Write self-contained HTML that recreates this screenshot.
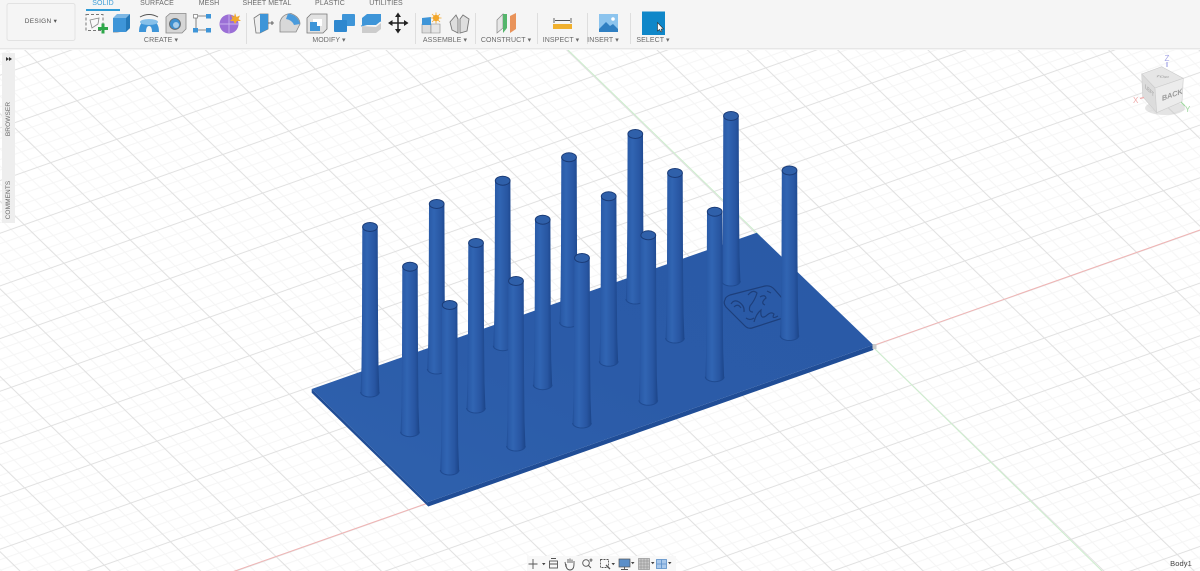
<!DOCTYPE html>
<html><head><meta charset="utf-8"><style>
html,body{margin:0;padding:0;width:1200px;height:571px;overflow:hidden;background:#fff;font-family:"Liberation Sans",sans-serif}
#stage{position:absolute;left:0;top:0}
.t{position:absolute;font-size:7px;color:#6a6a6a;transform:translateX(-50%);white-space:nowrap;letter-spacing:.1px;line-height:8px}
</style></head><body>
<svg id="stage" width="1200" height="571" viewBox="0 0 1200 571" xmlns="http://www.w3.org/2000/svg">
<defs>
<pattern id="grid" width="100" height="100" patternUnits="userSpaceOnUse" patternTransform="matrix(.662 -.234 .398 .386 872.2 346.3)">
<g fill="#f5f5f5">
<rect x="19.2" y="0" width="1.6" height="100"/><rect x="39.2" y="0" width="1.6" height="100"/><rect x="59.2" y="0" width="1.6" height="100"/><rect x="79.2" y="0" width="1.6" height="100"/>
<rect y="19" x="0" width="100" height="2"/><rect y="39" x="0" width="100" height="2"/><rect y="59" x="0" width="100" height="2"/><rect y="79" x="0" width="100" height="2"/>
</g>
<g fill="#e0e0e0">
<rect x="0" y="0" width=".8" height="100"/><rect x="99.2" y="0" width=".8" height="100"/>
<rect y="0" x="0" width="100" height="1"/><rect y="99" x="0" width="100" height="1"/>
</g>
</pattern>
<linearGradient id="pg" x1="0" y1="0" x2="1" y2="0">
<stop offset="0" stop-color="#214d96"/><stop offset=".1" stop-color="#2a5ba8"/><stop offset=".35" stop-color="#3165b3"/><stop offset=".75" stop-color="#2856a2"/><stop offset="1" stop-color="#1c4589"/>
</linearGradient>
<linearGradient id="pl" x1="0" y1="1" x2="1" y2="0">
<stop offset="0" stop-color="#2f62ae"/><stop offset=".5" stop-color="#2b5ba8"/><stop offset="1" stop-color="#2a5aa6"/>
</linearGradient>
<g id="peg">
<path d="M-7.700,0 L-8,90 L-8.500,140 L-9.400,165 A9.400,5 0 0 0 9.400,165 L8.500,140 L8,90 L7.700,0 Z" fill="url(#pg)"/>
<path d="M-9.400,165 A9.400,5 0 0 0 9.400,165" fill="none" stroke="#1f4a90" stroke-width="1"/>
<ellipse cx="0" cy="0" rx="7.400" ry="4.500" fill="#2f60aa" stroke="#1b3c78" stroke-width="1"/>
</g>
</defs>
<rect width="1200" height="571" fill="#fff"/>
<rect width="1200" height="571" fill="url(#grid)"/>
<line x1="872" y1="346" x2="1200" y2="230" stroke="#f0b4b4" stroke-width="1"/>
<line x1="232" y1="572" x2="428" y2="503" stroke="#f0b4b4" stroke-width="1"/>
<line x1="874" y1="348" x2="1102" y2="571" stroke="#cdeecd" stroke-width="1"/>
<line x1="568" y1="50" x2="760" y2="236" stroke="#cdeecd" stroke-width="1"/>

<!-- plate -->
<polygon points="311.700,389 427.300,502.300 873.300,345 873.300,350 428.300,506.500 311.700,392.700" fill="#204d96"/>
<polygon points="311.700,389 756.700,232.700 873.300,345 427.300,502.300" fill="url(#pl)"/>
<rect x="872.500" y="344" width="4" height="5" fill="#c9c9c9"/>

<use href="#peg" x="731" y="116"/>
<use href="#peg" x="635.300" y="134"/>
<use href="#peg" x="569" y="157.300"/>

<!-- logo -->
<g fill="none" stroke="#1d3f7c" stroke-width="1.200">
<path d="M725,300 Q725,297 730,295 L765,286 Q771,285 775,290 L782,298 M783,318 L752,328 Q748,329 745,326 L726,307 Q723,303 725,300"/>
<path d="M731,304 Q734,299 739,302 Q745,306 744,312 M734,307 Q738,303 741,308"/>
<path d="M748,295 Q753,289 757,293 Q755,300 750,306 Q748,312 753,312 M760,297 Q765,294 766,298 Q760,303 765,305 M754,322 Q756,314 761,310 Q760,320 766,316 Q771,311 774,314 Q771,320 778,316"/>
<path d="M746,318 Q750,321 754,318 M767,291 L771,293"/>
</g>

<use href="#peg" x="789.500" y="170.500"/>
<use href="#peg" x="675" y="173"/>
<use href="#peg" x="502.700" y="180.700"/>
<use href="#peg" x="608.700" y="196.300"/>
<use href="#peg" x="436.700" y="204"/>
<use href="#peg" x="714.700" y="211.700"/>
<use href="#peg" x="542.700" y="219.700"/>
<use href="#peg" x="370" y="227"/>
<use href="#peg" x="648.300" y="235.300"/>
<use href="#peg" x="476" y="243"/>
<use href="#peg" x="582" y="258"/>
<use href="#peg" x="410" y="266.700"/>
<use href="#peg" x="516" y="281"/>
<use href="#peg" x="449.700" y="305"/>

<!-- toolbar -->
<rect x="0" y="0" width="1200" height="48" fill="#f5f5f5"/>
<rect x="0" y="48" width="1200" height="1" fill="#e6e6e6"/>
<rect x="0" y="49" width="1200" height="1" fill="#f4f4f4"/>
<rect x="7" y="3.500" width="68" height="37" rx="2" fill="#f5f5f5" stroke="#e2e2e2"/>
<rect x="86" y="9" width="34" height="2" fill="#2e9bd6"/>
<g stroke="#dedede" stroke-width="1">
<line x1="246.500" y1="13" x2="246.500" y2="44"/><line x1="415.500" y1="13" x2="415.500" y2="44"/><line x1="475.500" y1="13" x2="475.500" y2="44"/><line x1="537.500" y1="13" x2="537.500" y2="44"/><line x1="587.500" y1="13" x2="587.500" y2="44"/><line x1="630.500" y1="13" x2="630.500" y2="44"/>
</g>

<!-- sketch -->
<rect x="86" y="14.500" width="17" height="16" fill="#f8f8f8" stroke="#777" stroke-width="1" stroke-dasharray="3 2"/>
<path d="M90,20 L99,18 L98,24 L92,28 Z" fill="none" stroke="#888" stroke-width=".8"/>
<path d="M98,27 h3.500 v-3.500 h3 v3.500 h3.500 v3 h-3.500 v3.500 h-3 v-3.500 h-3.500 z" fill="#2ea84a"/>
<!-- box -->
<polygon points="113,18 126,15 130,15 130,29 117,33 113,33" fill="#6a6a6a" opacity=".35"/>
<polygon points="113,18 117,14 130,14 126,18" fill="#7db7e4"/>
<polygon points="113,18 126,18 126,32 113,32" fill="#3e95d8"/>
<polygon points="126,18 130,14 130,28 126,32" fill="#2478b8"/>
<!-- loft -->
<path d="M140,17 Q149,12 158,17" fill="none" stroke="#555" stroke-width="1"/>
<path d="M139,32 Q139,20 149,20 Q159,20 159,32 L152,32 Q152,26 149,26 Q146,26 146,32 Z" fill="#3e95d8"/>
<ellipse cx="149" cy="22" rx="9" ry="3" fill="#86c0ea"/>
<!-- hole -->
<polygon points="166,17 170,13.500 186,13.500 186,29 182,33 166,33" fill="#d6d6d6" stroke="#888" stroke-width=".8"/>
<circle cx="175" cy="24" r="5.500" fill="#3e8fcf" stroke="#666" stroke-width=".8"/>
<circle cx="176" cy="25" r="3" fill="#a8cdea"/>
<!-- pattern -->
<path d="M198,16 H206 M196,18 V28 M198,30 H206" stroke="#666" stroke-width=".8" fill="none"/>
<rect x="193.500" y="14.500" width="4" height="3.500" fill="#fff" stroke="#777" stroke-width=".7"/>
<rect x="206" y="14" width="5" height="4.500" fill="#3e95d8"/>
<rect x="193" y="28" width="5" height="4.500" fill="#3e95d8"/>
<rect x="206" y="28" width="5" height="4.500" fill="#3e95d8"/>
<!-- form -->
<circle cx="229" cy="24" r="9.500" fill="#9b6fd6"/>
<path d="M229,15 V33 M220,24 H238" stroke="#c9b2ee" stroke-width=".9"/>
<polygon points="235,13 236.500,17 240,15.500 238.500,19 241,21 237,21 235,24 233.500,21 230,21 232.500,18.500 231,15 234,17" fill="#f0a92e"/>
<!-- press pull -->
<path d="M254,18 L260,14 L268,14 L268,29 L260,33 L256,33 Z" fill="#eee" stroke="#777" stroke-width=".8"/>
<polygon points="260,14 268,14 268,29 260,33" fill="#3e95d8"/>
<path d="M268,23 H274 M272,21 V25" stroke="#444" stroke-width=".8"/>
<!-- fillet -->
<path d="M280,32 V22 Q282,14 291,13.500 Q300,17 300,24 L296,32 Z" fill="#d8d8d8" stroke="#888" stroke-width=".8"/>
<path d="M288,13.500 Q298,15 300,24 L294,25 Q292,20 286,19 Z" fill="#4a9bdc"/>
<!-- shell -->
<path d="M307,18 L311,14 L327,14 L327,29 L323,33 L307,33 Z" fill="#e2e2e2" stroke="#777" stroke-width=".8"/>
<polygon points="310,22 320,22 320,31 310,31" fill="#3e95d8"/>
<polygon points="313,19 322,19 322,26 317,26 317,22 313,22" fill="#fff"/>
<!-- combine -->
<rect x="342" y="14" width="13" height="12" rx="1" fill="#3e95d8"/>
<rect x="334" y="20" width="13" height="12" rx="1" fill="#2f88cf"/>
<!-- split -->
<polygon points="362,18 367,14 381,14 381,21 376,25 362,25" fill="#3e95d8"/>
<line x1="361" y1="26" x2="381" y2="21" stroke="#3e95d8"/>
<polygon points="362,26 376,27 381,23 381,29 376,33 362,33" fill="#ccc"/>
<!-- move -->
<path d="M398,14 V32 M389.500,23 H407.500" stroke="#222" stroke-width="1.500"/>
<path d="M398,12.500 L401,17 H395 Z M398,33.500 L401,29 H395 Z M388,23 L392.500,20 V26 Z M408.500,23 L404,20 V26 Z" fill="#222"/>
<!-- assemble -->
<polygon points="422,24 431,24 431,33 422,33" fill="#dcdcdc" stroke="#888" stroke-width=".6"/>
<polygon points="431,24 440,24 440,33 431,33" fill="#e6e6e6" stroke="#888" stroke-width=".6"/>
<polygon points="422,18 431,17 431,25 422,25" fill="#3e95d8"/>
<circle cx="436" cy="18" r="3.200" fill="#f3a72a"/>
<path d="M436,12.500 V23.500 M430.500,18 H441.500 M432,14 L440,22 M440,14 L432,22" stroke="#f3a72a" stroke-width=".8"/>
<!-- joint -->
<path d="M450,22 L456,15 L458,19 V33 L452,30 Z M469,19 L463,15 L460,19 V33 L467,31 Z" fill="#dedede" stroke="#777" stroke-width=".9"/>
<!-- construct -->
<path d="M497,20 L503,14 V28 L497,33 Z" fill="#e6e6e6" stroke="#888" stroke-width=".7"/>
<polygon points="503,14 507,14 507,28 503,33" fill="#55b56c"/>
<polygon points="510,16 516,13 516,29 510,33" fill="#e9935a"/>
<!-- inspect -->
<path d="M554,18 V23 M571,18 V23 M555,20.500 H570" stroke="#555" stroke-width=".9"/>
<rect x="553" y="24" width="19" height="5" fill="#f0b02e"/>
<!-- insert -->
<rect x="599" y="14" width="19" height="18" fill="#8cc4ee"/>
<path d="M599,29 L606,22 L610,26 L613,24 L618,29 V32 H599 Z" fill="#2f7fc2"/>
<circle cx="613" cy="19" r="1.800" fill="#fff"/>
<!-- select -->
<rect x="642" y="11.500" width="23" height="23.500" fill="#0f87c9"/>
<path d="M657.500,22.500 V31 L659.500,29.500 L661,32 L662,31.500 L661,29 H663.500 Z" fill="#fff" stroke="#333" stroke-width=".6"/>

<!-- left panel -->
<rect x="2" y="53" width="13" height="170" fill="#eeeeee"/>
<path d="M6,57 L9,59 L6,61 Z M9,57 L12,59 L9,61 Z" fill="#333"/>

<!-- view cube -->
<ellipse cx="1165" cy="108" rx="20" ry="7" fill="#bbb" opacity=".4"/>
<polygon points="1141.700,74 1161.700,66.700 1183.300,78.300 1155,88" fill="#e6e6e6" stroke="#ccc" stroke-width=".6"/>
<polygon points="1141.700,74 1155,88 1156.700,112.700 1142.700,96.700" fill="#dcdcdc" stroke="#ccc" stroke-width=".6"/>
<polygon points="1155,88 1183.300,78.300 1182,101.700 1156.700,112.700" fill="#ececec" stroke="#ccc" stroke-width=".6"/>
<text x="0" y="0" transform="matrix(.95 -.35 0 1 1162 101)" font-family="Liberation Sans" font-size="7.500" font-weight="bold" fill="#999">BACK</text>
<text x="0" y="0" transform="matrix(.9 .1 -.4 .4 1155 77)" font-family="Liberation Sans" font-size="7" font-weight="bold" fill="#aaa">TOP</text>
<text x="0" y="0" transform="matrix(.6 .6 0 1 1145 88)" font-family="Liberation Sans" font-size="6" font-weight="bold" fill="#aaa">LEFT</text>
<text x="1164.500" y="61" font-family="Liberation Sans" font-size="8" fill="#a5a6e6">Z</text>
<line x1="1167" y1="62" x2="1167" y2="67" stroke="#a5a6e6" stroke-width="1.200"/>
<text x="1133" y="103" font-family="Liberation Sans" font-size="8" fill="#eeaaaa">X</text>
<line x1="1140" y1="98.500" x2="1144" y2="97.500" stroke="#eeaaaa" stroke-width="1.200"/>
<text x="1185" y="112" font-family="Liberation Sans" font-size="8" fill="#9ed89e">Y</text>
<line x1="1181" y1="102" x2="1185" y2="106" stroke="#9ed89e" stroke-width="1.200"/>

<!-- nav bar -->
<rect x="527" y="556" width="149" height="15" fill="#f8f8f8"/>
<g fill="none" stroke="#555" stroke-width=".9">
<path d="M533,559 V569 M528.500,564 H537.500"/>
<rect x="549.500" y="561" width="8" height="7"/><path d="M551,558.500 h5 M549.500,564 h8"/>
<path d="M566,567 L565,562 M568,563 V559 M570,563 V558.500 M572,563 V559.500 M574,564 V561 M566,564 Q566,570 570,570 Q574,570 574,564"/>
<circle cx="586" cy="563" r="3.300"/><path d="M588.500,565.500 L591,568 M591,558.500 V562 M589.500,560 H592.500"/>
<rect x="600.500" y="559.500" width="8" height="8" stroke-dasharray="2 1"/><path d="M606,565 L610,569" stroke-width="1.300"/>
</g>
<rect x="619" y="559" width="11" height="8" fill="#5b8fc9" stroke="#555" stroke-width=".7"/>
<path d="M624.500,567 V569 M621,569.500 H628" stroke="#555" stroke-width=".9"/>
<rect x="638.500" y="558.500" width="11" height="11" fill="#c9c9c9" stroke="#888" stroke-width=".6"/>
<path d="M641,558.500 V569.500 M644,558.500 V569.500 M647,558.500 V569.500 M638.500,561 H649.500 M638.500,564 H649.500 M638.500,567 H649.500" stroke="#888" stroke-width=".5"/>
<rect x="656.500" y="559.500" width="10" height="9" fill="#a9c8ea" stroke="#5b8fc9" stroke-width=".8"/>
<path d="M661.500,559.500 V568.500 M656.500,564 H666.500" stroke="#5b8fc9" stroke-width=".8"/>
<path d="M542,563 h3.500 l-1.750,2.200 Z M611.500,563 h3.500 l-1.750,2.200 Z M631,562 h3.500 l-1.750,2.200 Z M651,562 h3.500 l-1.750,2.200 Z M668,562 h3.500 l-1.750,2.200 Z" fill="#444"/>
</svg>

<div class="t" style="left:41px;top:18px;color:#555;font-size:6.500px;letter-spacing:.3px">DESIGN &#9662;</div>
<div class="t" style="left:103px;top:0;color:#3c9dd8">SOLID</div>
<div class="t" style="left:157px;top:0">SURFACE</div>
<div class="t" style="left:209px;top:0">MESH</div>
<div class="t" style="left:267px;top:0">SHEET METAL</div>
<div class="t" style="left:330px;top:0">PLASTIC</div>
<div class="t" style="left:386px;top:0">UTILITIES</div>
<div class="t" style="left:161px;top:37px">CREATE &#9662;</div>
<div class="t" style="left:329px;top:37px">MODIFY &#9662;</div>
<div class="t" style="left:445px;top:37px">ASSEMBLE &#9662;</div>
<div class="t" style="left:506px;top:37px">CONSTRUCT &#9662;</div>
<div class="t" style="left:561px;top:37px">INSPECT &#9662;</div>
<div class="t" style="left:603px;top:37px">INSERT &#9662;</div>
<div class="t" style="left:653px;top:37px">SELECT &#9662;</div>
<div class="t" style="left:9px;top:119px;font-size:6.500px;transform:translate(-50%,-50%) rotate(-90deg)">BROWSER</div>
<div class="t" style="left:9px;top:200px;font-size:6.500px;transform:translate(-50%,-50%) rotate(-90deg)">COMMENTS</div>
<div class="t" style="left:1181px;top:560px;color:#444;font-size:7.500px">Body1</div>
</body></html>
